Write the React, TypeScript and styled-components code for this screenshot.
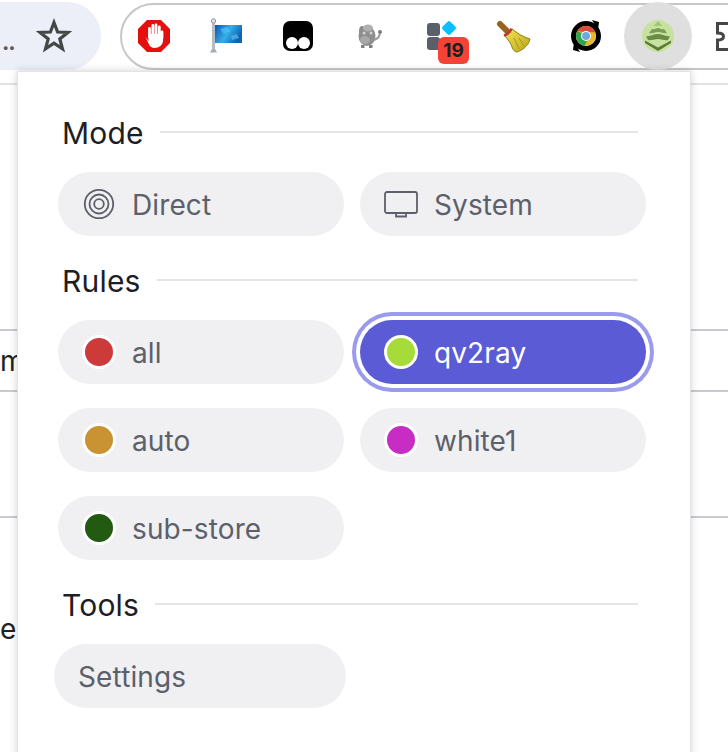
import React from "react";
import styled, { createGlobalStyle } from "styled-components";

const GlobalStyle = createGlobalStyle`
    html, body {
        margin: 0;
        padding: 0;
        background: #ffffff;
    }
`;

const Page = styled.div`
    position: relative;
    width: 728px;
    height: 752px;
    overflow: hidden;
    background: #ffffff;
    font-family: Inter, "Liberation Sans", sans-serif;
`;

const Toolbar = styled.div`
    display: flex;
    align-items: center;
    gap: 19px;
    height: 72px;
`;

const AddressEnd = styled.div`
    flex: 0 0 101px;
    height: 68px;
    display: flex;
    align-items: center;
    background: #eceff8;
    border-radius: 0 34px 34px 0;
`;

const Dots = styled.span`
    width: 36px;
    padding: 12px 0 0 2px;
    box-sizing: border-box;
    font-size: 22px;
    font-weight: 700;
    letter-spacing: -1px;
    color: #55585c;
`;

const ExtensionPill = styled.div`
    flex: 0 0 720px;
    height: 67px;
    box-sizing: border-box;
    display: flex;
    align-items: center;
    gap: 32px;
    padding-left: 12px;
    border: 2px solid #c7c7c7;
    border-radius: 34px;
`;

const IconSlot = styled.div<{ $active?: boolean }>`
    position: relative;
    flex: 0 0 40px;
    height: 40px;
    display: flex;
    align-items: center;
    justify-content: center;

    &::before {
        content: "";
        display: ${(p) => (p.$active ? "block" : "none")};
        position: absolute;
        left: -14px;
        top: -14px;
        width: 68px;
        height: 68px;
        border-radius: 50%;
        background: #dfdfdf;
    }

    svg {
        position: relative;
    }
`;

const CountBadge = styled.span`
    position: absolute;
    left: 16px;
    top: 21px;
    width: 31px;
    height: 27px;
    border-radius: 6px;
    background: #f44336;
    color: #1f1f1f;
    font-size: 19px;
    font-weight: 700;
    line-height: 28px;
    text-align: center;
`;

const Backdrop = styled.div`
    color: #222222;
    font-size: 28px;
`;

const BackdropRow = styled.div<{ $height: number; $rule?: string }>`
    height: ${(p) => p.$height}px;
    box-sizing: border-box;
    display: flex;
    align-items: center;
    border-bottom: 2px solid ${(p) => p.$rule ?? "transparent"};
`;

const Popup = styled.div`
    position: absolute;
    left: 17px;
    top: 71px;
    width: 674px;
    height: 720px;
    box-sizing: border-box;
    padding: 41px 44px 0 40px;
    background: #ffffff;
    border: 1px solid #e4e4e4;
    box-shadow: 0 0 8px rgba(0, 0, 0, 0.18);
`;

const SectionHead = styled.div`
    display: flex;
    align-items: center;
    gap: 16px;
    height: 40px;
    margin: 25px 8px 19px 4px;
    color: #1c2024;
    font-size: 30px;
    letter-spacing: 0.2px;
    line-height: 40px;

    &:first-child {
        margin-top: 0;
    }

    &::after {
        content: "";
        flex: 1;
        height: 2px;
        margin-top: -3px;
        background: #e4e4e9;
    }
`;

const PillGrid = styled.div`
    display: grid;
    grid-template-columns: 286px 286px;
    grid-auto-rows: 64px;
    column-gap: 16px;
    row-gap: 24px;
`;

const Pill = styled.div<{ $selected?: boolean }>`
    display: flex;
    align-items: center;
    gap: 16px;
    padding-left: 24px;
    border-radius: 32px;
    font-size: 28px;
    letter-spacing: 0.12px;
    background: ${(p) => (p.$selected ? "#5b5bd6" : "#f0f0f3")};
    color: ${(p) => (p.$selected ? "#ffffff" : "#5c606a")};
    box-shadow: ${(p) => (p.$selected ? "0 0 0 4px #ffffff, 0 0 0 8px #9b9bee" : "none")};
`;

const ToolPill = styled(Pill)`
    width: 292px;
    height: 64px;
    box-sizing: border-box;
    margin-left: -4px;
`;

const PillLabel = styled.span`
    margin-top: 1px;
`;

const Dot = styled.span<{ $color: string }>`
    width: 28px;
    height: 28px;
    flex: none;
    border: 3px solid #ffffff;
    border-radius: 50%;
    background: ${(p) => p.$color};
`;

const PillIcon = styled.svg`
    width: 34px;
    height: 34px;
    flex: none;
    color: #5c606a;
`;

const StarIcon = () => (
    <svg width="36" height="36" viewBox="0 0 36 36">
        <polygon
            points="18,4.500 21.600,14 31.800,14.500 23.800,20.900 26.500,30.800 18,25.200 9.500,30.800 12.200,20.900 4.200,14.500 14.400,14"
            fill="none"
            stroke="#444746"
            strokeWidth="3.200"
        />
    </svg>
);

const PuzzleIcon = () => (
    <svg width="40" height="40" viewBox="0 0 40 40">
        <path
            d="M36 7.500H7.500V17c4.500 0 6 1.500 6 3.500s-1.500 3.500-6 3.500V33.500H36"
            fill="none"
            stroke="#444746"
            strokeWidth="3"
        />
    </svg>
);

const StopIcon = () => (
    <svg width="34" height="34" viewBox="0 0 34 34">
        <polygon points="10,1 24,1 33,10 33,24 24,33 10,33 1,24 1,10" fill="#e40f0f" />
        <path
            d="M12.500 18V9.500M15.800 16V6.500M19 16V6M22.300 17V8M25 19v-6"
            stroke="#fff"
            strokeWidth="2.800"
            strokeLinecap="round"
        />
        <path d="M8.500 18l3.500 7.500c1 2 3 3.500 5.500 3.500 4.500 0 8.500-3 8.500-7.500V15H11.500v7z" fill="#fff" />
    </svg>
);

const FlagIcon = () => (
    <svg width="40" height="40" viewBox="0 0 40 40">
        <defs>
            <linearGradient id="flagFill" x1="0" y1="0" x2="1" y2="0.4">
                <stop offset="0" stopColor="#0f52b0" />
                <stop offset="0.55" stopColor="#35b0e8" />
                <stop offset="1" stopColor="#1262b0" />
            </linearGradient>
        </defs>
        <rect x="9" y="9" width="27" height="18" fill="url(#flagFill)" />
        <path d="M14 13l7-2 3 4-6 3zM25 20l6-2 2 4-7 2z" fill="#58c8f0" opacity="0.6" />
        <rect x="6" y="6" width="3" height="28" fill="#b4bcc4" />
        <circle cx="7.500" cy="5" r="2.200" fill="#dfe3e8" stroke="#8f98a0" />
        <path d="M4 36.500l1.500-3h4l1.500 3z" fill="#a6adb3" />
    </svg>
);

const MonkeyIcon = () => (
    <svg width="32" height="32" viewBox="0 0 32 32">
        <rect x="1" y="1" width="30" height="30" rx="7" fill="#000" />
        <circle cx="10" cy="23" r="6" fill="#fff" />
        <circle cx="22" cy="23" r="6" fill="#fff" />
    </svg>
);

const ElephantIcon = () => (
    <svg width="40" height="40" viewBox="0 0 40 40">
        <ellipse cx="12" cy="15" rx="3" ry="5" fill="#888" />
        <ellipse cx="17" cy="20" rx="8.500" ry="10" fill="#8f8f8f" />
        <ellipse cx="18" cy="12" rx="5" ry="3.500" fill="#b0b0b0" />
        <ellipse cx="15" cy="24" rx="5" ry="4" fill="#a8a8a8" />
        <path d="M11 29h3.500v3H11zM19 29h3.500v3H19z" fill="#808080" />
        <path d="M24 24l4-2 2-4" stroke="#9a9a9a" strokeWidth="2" fill="none" />
        <circle cx="30" cy="16" r="2" fill="#7d7d7d" />
        <circle cx="14" cy="17" r="1.500" fill="#d4d4d4" />
        <circle cx="21" cy="17" r="1.500" fill="#d4d4d4" />
    </svg>
);

const BlocksIcon = () => (
    <svg width="40" height="40" viewBox="0 0 40 40">
        <rect x="5" y="7" width="13" height="13" rx="3" fill="#5b5f69" />
        <rect x="5" y="21" width="13" height="13" rx="3" fill="#5b5f69" />
        <rect x="21.500" y="6.500" width="11" height="11" rx="2" fill="#0cc0ff" transform="rotate(45 27 12)" />
    </svg>
);

const BroomIcon = () => (
    <svg width="40" height="40" viewBox="0 0 40 40">
        <defs>
            <linearGradient id="broomFill" x1="0" y1="0" x2="1" y2="1">
                <stop offset="0" stopColor="#f4e45a" />
                <stop offset="1" stopColor="#b7a514" />
            </linearGradient>
        </defs>
        <path d="M6 8l8 8" stroke="#9a6220" strokeWidth="6" strokeLinecap="round" />
        <path
            d="M11 20c3-1 5-3 7-7 5 4 11 8 18 10-1 5-5 10-13 13-2 0-4-2-5-5-1-4-4-7-7-11z"
            fill="url(#broomFill)"
            stroke="#8c7f14"
            strokeWidth="1"
        />
        <path d="M10 19.500c3-1 6-3 7.500-7" stroke="#c23a2c" strokeWidth="2.500" fill="none" />
        <path d="M20 22l5 11M25 22l5 8" stroke="#a8981a" strokeWidth="1" />
    </svg>
);

const ChromeSyncIcon = () => (
    <svg width="40" height="40" viewBox="0 0 40 40">
        <circle cx="20" cy="20" r="12.500" fill="none" stroke="#000" strokeWidth="5" />
        <path d="M26 4l7 2-1 8zM14 36l-7-2 1-8z" fill="#000" />
        <circle cx="20" cy="20" r="10" fill="#e8b92a" />
        <path d="M11.400 15A10 10 0 0 1 29.300 16.200H20z" fill="#dd4b3e" />
        <path d="M11.400 15A10 10 0 0 0 18.500 29.900L23 21z" fill="#2ea44f" />
        <circle cx="20" cy="20" r="5" fill="#fff" />
        <circle cx="20" cy="20" r="4" fill="#6fa8e0" />
    </svg>
);

const LayersIcon = () => (
    <svg width="32" height="32" viewBox="0 0 32 32">
        <circle cx="16" cy="16" r="16" fill="#c5e29e" />
        <path d="M16 1l4.500 5h-9z" fill="#a6c67a" />
        <path d="M10 9c3 1 4-1 6-1s3 2 6 1l3 4c-3 1-5-1-9-1s-6 2-9 1z" fill="#7e9b55" />
        <path d="M4 16c4 1 8-2 12-2s8 3 12 2l-2 4c-3 1-6-1-10-1s-7 2-10 1z" fill="#6d8a45" />
        <path d="M3 20.500l13 7 13-7v2.500L16 31 3 23z" fill="#5f7a38" />
    </svg>
);

const DirectIcon = () => (
    <PillIcon viewBox="0 0 34 34" fill="none" stroke="currentColor" strokeWidth="1.800">
        <circle cx="17" cy="17" r="14.200" />
        <circle cx="17" cy="17" r="9.500" />
        <circle cx="17" cy="17" r="4.800" />
    </PillIcon>
);

const SystemIcon = () => (
    <PillIcon viewBox="0 0 34 34" fill="none" stroke="currentColor" strokeWidth="1.800">
        <rect x="1" y="5" width="32" height="21" rx="2" />
        <path d="M12 26v3.500h10V26" />
    </PillIcon>
);

const rules = [
    { name: "all", color: "#cc3a3a" },
    { name: "qv2ray", color: "#a6dc3a", selected: true },
    { name: "auto", color: "#c99233" },
    { name: "white1", color: "#c72cc4" },
    { name: "sub-store", color: "#225a12" },
];

const App: React.FC = () => {
    return (
        <Page>
            <GlobalStyle />
            <Toolbar>
                <AddressEnd>
                    <Dots>..</Dots>
                    <StarIcon />
                </AddressEnd>
                <ExtensionPill>
                    <IconSlot>
                        <StopIcon />
                    </IconSlot>
                    <IconSlot>
                        <FlagIcon />
                    </IconSlot>
                    <IconSlot>
                        <MonkeyIcon />
                    </IconSlot>
                    <IconSlot>
                        <ElephantIcon />
                    </IconSlot>
                    <IconSlot>
                        <BlocksIcon />
                        <CountBadge>19</CountBadge>
                    </IconSlot>
                    <IconSlot>
                        <BroomIcon />
                    </IconSlot>
                    <IconSlot>
                        <ChromeSyncIcon />
                    </IconSlot>
                    <IconSlot $active>
                        <LayersIcon />
                    </IconSlot>
                    <IconSlot>
                        <PuzzleIcon />
                    </IconSlot>
                </ExtensionPill>
            </Toolbar>
            <Backdrop>
                <BackdropRow $height={13} $rule="#e2e2e2" />
                <BackdropRow $height={246} $rule="#c9c9d1" />
                <BackdropRow $height={61} $rule="#c9c9d1">
                    m
                </BackdropRow>
                <BackdropRow $height={126} $rule="#c9c9d1" />
                <BackdropRow $height={224}>e</BackdropRow>
            </Backdrop>
            <Popup>
                <SectionHead>Mode</SectionHead>
                <PillGrid>
                    <Pill>
                        <DirectIcon />
                        <PillLabel>Direct</PillLabel>
                    </Pill>
                    <Pill>
                        <SystemIcon />
                        <PillLabel>System</PillLabel>
                    </Pill>
                </PillGrid>
                <SectionHead>Rules</SectionHead>
                <PillGrid>
                    {rules.map((rule) => (
                        <Pill key={rule.name} $selected={rule.selected}>
                            <Dot $color={rule.color} />
                            <PillLabel>{rule.name}</PillLabel>
                        </Pill>
                    ))}
                </PillGrid>
                <SectionHead>Tools</SectionHead>
                <ToolPill>
                    <PillLabel>Settings</PillLabel>
                </ToolPill>
            </Popup>
        </Page>
    );
};

export default App;
